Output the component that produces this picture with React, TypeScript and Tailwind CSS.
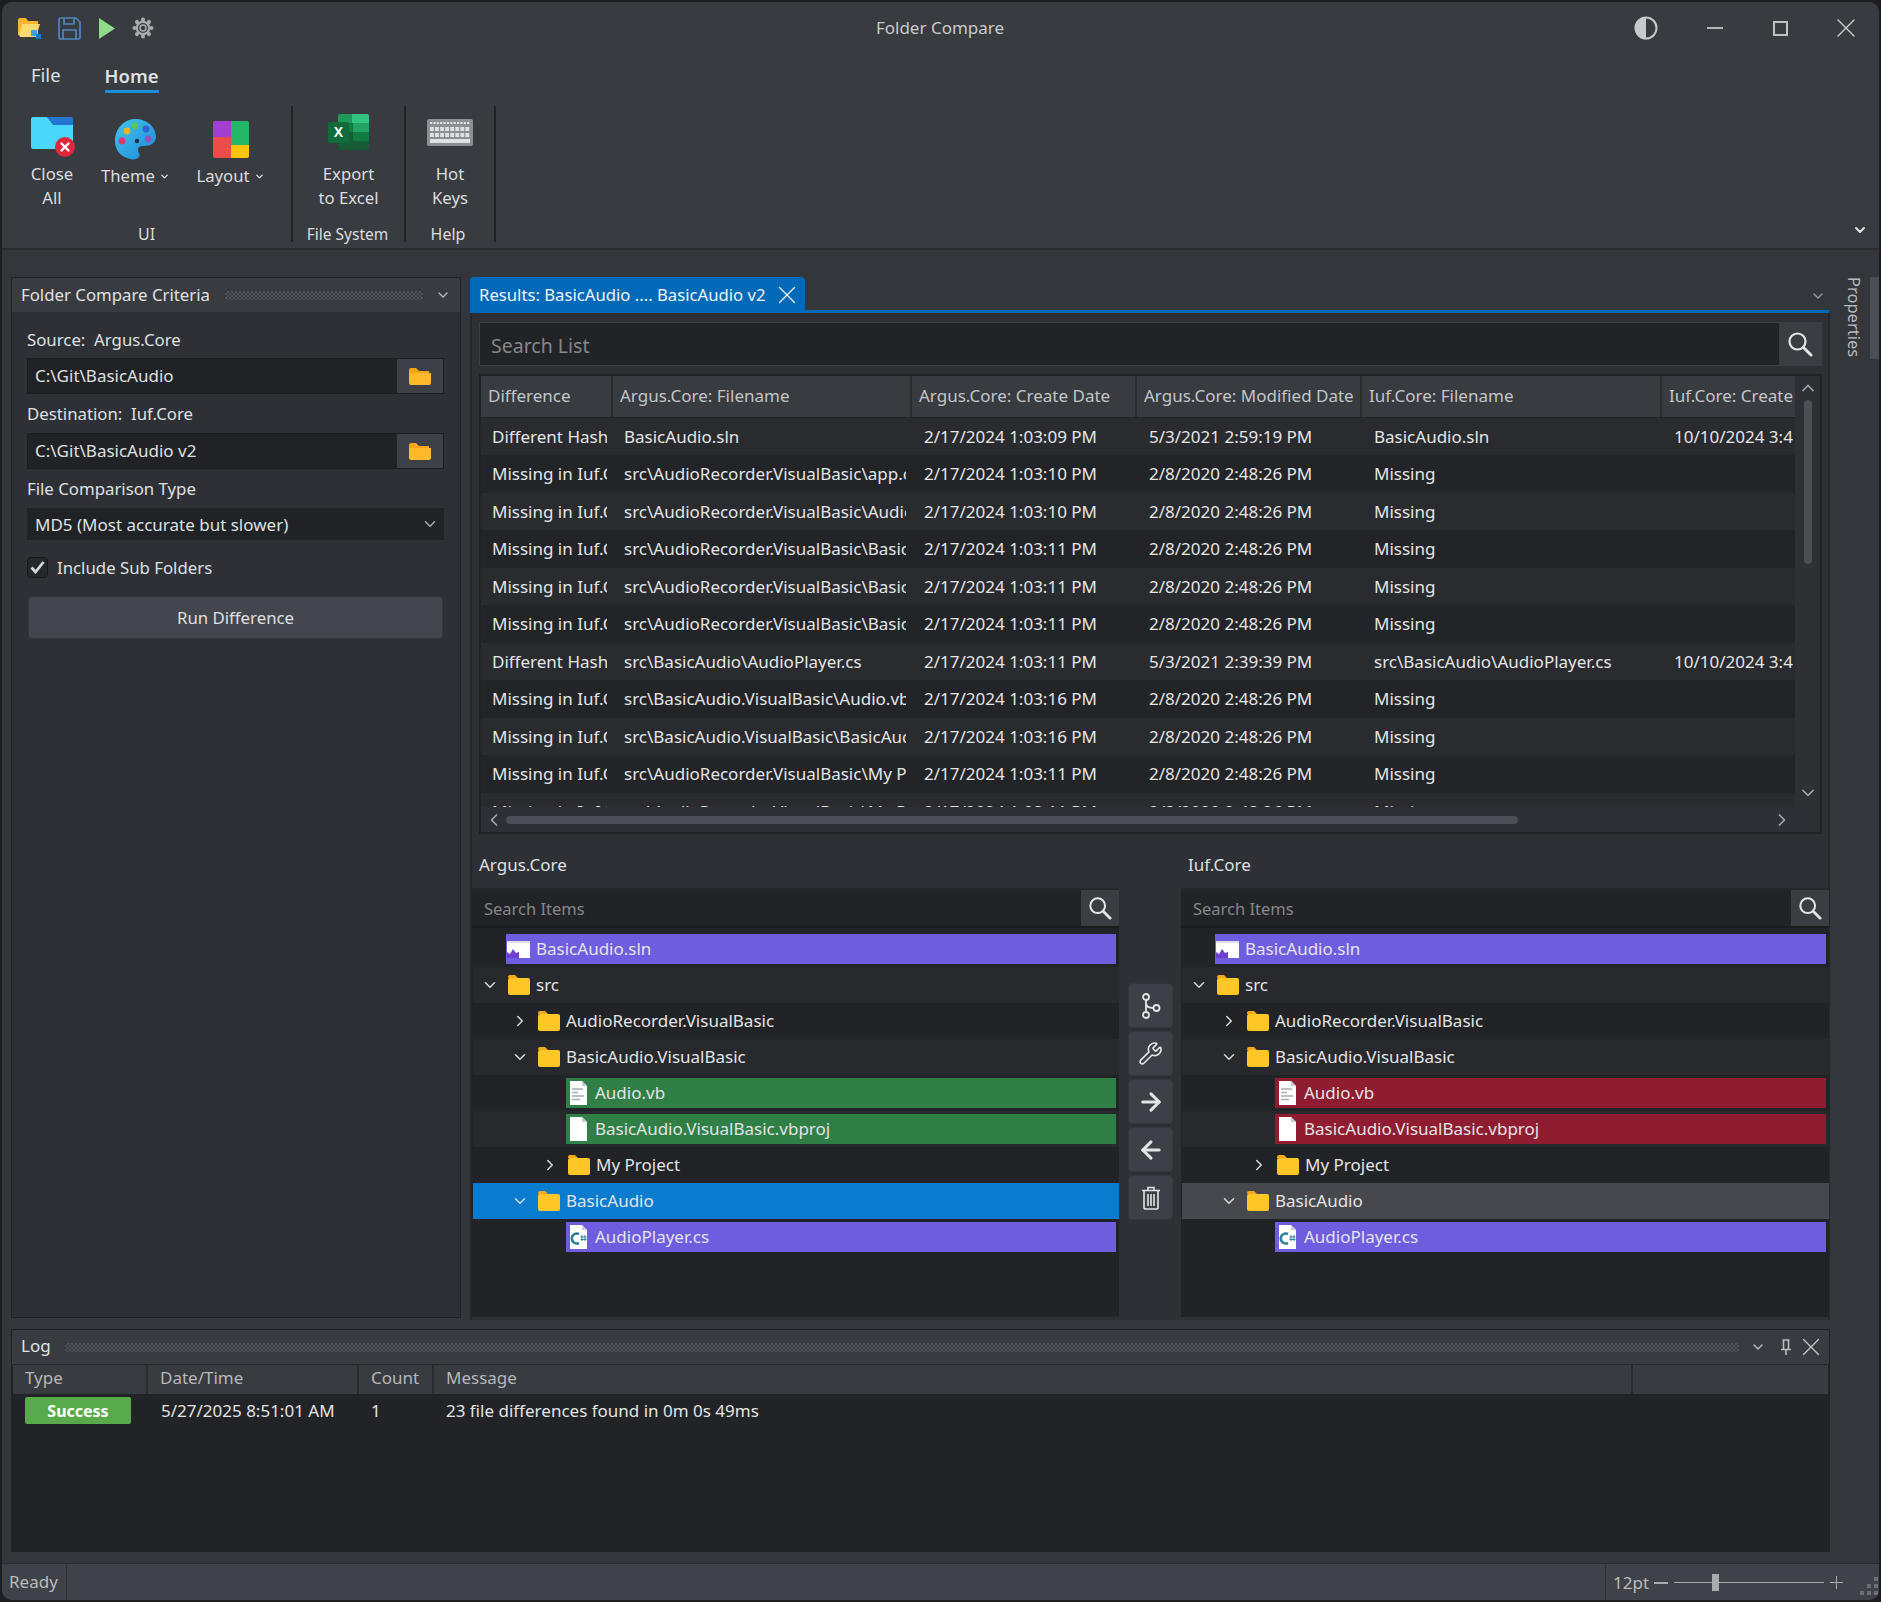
import { ArrowLeft, ArrowRight, ChevronDown, ChevronLeft, ChevronRight, ChevronUp, Wrench, X } from "lucide-react";
import type { ReactNode } from "react";

const FONT = "font-['Noto_Sans','Open_Sans',sans-serif]";

const COLS = [
    { w: "w-[132px]", cell: "pl-[11px] pr-[6px]" },
    { w: "w-[299px]", cell: "pl-[11px] pr-[6px]" },
    { w: "w-[225px]", cell: "pl-[12px] pr-[6px]" },
    { w: "w-[225px]", cell: "pl-[12px] pr-[6px]" },
    { w: "w-[300px]", cell: "pl-[12px] pr-[6px]" },
    { w: "w-[133px]", cell: "pl-[12px] pr-[2px]" },
];

const HEADERS = [
    "Difference",
    "Argus.Core: Filename",
    "Argus.Core: Create Date",
    "Argus.Core: Modified Date",
    "Iuf.Core: Filename",
    "Iuf.Core: Create Date",
];

const MISSING = "Missing in Iuf.Core";
const ROWS = [
    ["Different Hash", "BasicAudio.sln", "2/17/2024 1:03:09 PM", "5/3/2021 2:59:19 PM", "BasicAudio.sln", "10/10/2024 3:45:12 PM"],
    [MISSING, "src\\AudioRecorder.VisualBasic\\app.config", "2/17/2024 1:03:10 PM", "2/8/2020 2:48:26 PM", "Missing", ""],
    [MISSING, "src\\AudioRecorder.VisualBasic\\AudioRecorder.vb", "2/17/2024 1:03:10 PM", "2/8/2020 2:48:26 PM", "Missing", ""],
    [MISSING, "src\\AudioRecorder.VisualBasic\\BasicAudio.vb", "2/17/2024 1:03:11 PM", "2/8/2020 2:48:26 PM", "Missing", ""],
    [MISSING, "src\\AudioRecorder.VisualBasic\\BasicAudio.vbproj", "2/17/2024 1:03:11 PM", "2/8/2020 2:48:26 PM", "Missing", ""],
    [MISSING, "src\\AudioRecorder.VisualBasic\\BasicAudio.sln", "2/17/2024 1:03:11 PM", "2/8/2020 2:48:26 PM", "Missing", ""],
    ["Different Hash", "src\\BasicAudio\\AudioPlayer.cs", "2/17/2024 1:03:11 PM", "5/3/2021 2:39:39 PM", "src\\BasicAudio\\AudioPlayer.cs", "10/10/2024 3:45:12 PM"],
    [MISSING, "src\\BasicAudio.VisualBasic\\Audio.vb", "2/17/2024 1:03:16 PM", "2/8/2020 2:48:26 PM", "Missing", ""],
    [MISSING, "src\\BasicAudio.VisualBasic\\BasicAudio.vbproj", "2/17/2024 1:03:16 PM", "2/8/2020 2:48:26 PM", "Missing", ""],
    [MISSING, "src\\AudioRecorder.VisualBasic\\My Project\\App.config", "2/17/2024 1:03:11 PM", "2/8/2020 2:48:26 PM", "Missing", ""],
    [MISSING, "src\\AudioRecorder.VisualBasic\\My Project\\Res.vb", "2/17/2024 1:03:11 PM", "2/8/2020 2:48:26 PM", "Missing", ""],
];

function FolderIcon() {
    return (
        <svg width="24" height="22" viewBox="0 0 24 22" className="shrink-0">
            <path d="M1 3a2 2 0 0 1 2-2h5l3 3H1z" fill="#f5a81c" />
            <rect x="1" y="4" width="22" height="17" rx="2" fill="#ffc628" />
        </svg>
    );
}

function OpenIcon() {
    return (
        <svg width="22" height="17" viewBox="0 0 22 17">
            <path d="M0 2a2 2 0 0 1 2-2h5l3 3h10v3H0z" fill="#f7a518" />
            <path d="M0 5h22v10a2 2 0 0 1-2 2H2a2 2 0 0 1-2-2z" fill="#ffb92a" />
        </svg>
    );
}

function SearchIcon({ size = 26 }: { size?: number }) {
    return (
        <svg width={size} height={size} viewBox="0 0 26 26" fill="none" stroke="#e3e4e5" strokeWidth="2.2" strokeLinecap="round">
            <circle cx="10.5" cy="10.5" r="8" />
            <path d="M16.5 16.5l7.5 7.5" strokeWidth="3" />
        </svg>
    );
}

function SlnIcon() {
    return (
        <svg width="23" height="20" viewBox="0 0 23 20" className="shrink-0">
            <rect x="0" y="2" width="23" height="17" fill="#fff" />
            <path d="M0 19v-6l3 2 3-5 3 4 3-1v6z" fill="#6f3fd0" />
            <rect x="0" y="2" width="23" height="2" fill="#dfe0e6" />
        </svg>
    );
}

function DocIcon({ lines = false, cs = false }: { lines?: boolean; cs?: boolean }) {
    return (
        <svg width="19" height="24" viewBox="0 0 19 24" className="shrink-0">
            <path d="M1 0h12l5 5v19H1z" fill="#fff" />
            <path d="M13 0v5h5z" fill="#c9ccd1" />
            {lines && <path d="M3 8h11M3 11.5h6M3 15h12M3 18.5h8" stroke="#a8abb0" strokeWidth="1.4" />}
            {cs && (
                <>
                    <path d="M10 9a5 5 0 1 0 0 9" fill="none" stroke="#2f7f9a" strokeWidth="2.6" />
                    <path d="M13 10v6M16 10v6M11.5 12h6M11.5 14.5h6" stroke="#2f7f9a" strokeWidth="1" />
                </>
            )}
        </svg>
    );
}

function CloseAllIcon() {
    return (
        <svg width="46" height="42" viewBox="0 0 46 42">
            <path d="M2 3a2 2 0 0 1 2-2h14l5 6h21v24a2 2 0 0 1-2 2H4a2 2 0 0 1-2-2z" fill="#49d8fb" />
            <path d="M18 1h24a2 2 0 0 1 2 2v6H24z" fill="#2476d2" />
            <circle cx="36" cy="31" r="10" fill="#e0263c" />
            <path d="M32.5 27.5l7 7M39.5 27.5l-7 7" stroke="#fff" strokeWidth="2.4" strokeLinecap="round" />
        </svg>
    );
}

function PaletteIcon() {
    return (
        <svg width="42" height="41" viewBox="0 0 42 41">
            <defs>
                <linearGradient id="palette-fill" x1="0" y1="0" x2="1" y2="1">
                    <stop offset="0" stopColor="#44c4ee" />
                    <stop offset="1" stopColor="#1b8ad8" />
                </linearGradient>
            </defs>
            <path d="M20 0C32 0 41 8 41 18c0 5-5 9-11 9-4 0-7 0-7 4 0 3 3 4 1 7-2 3-8 3-12 1C4 36 0 30 0 22 0 10 9 0 20 0z" fill="url(#palette-fill)" />
            <circle cx="12" cy="12" r="3.400" fill="#f0b323" />
            <circle cx="20" cy="7" r="3.200" fill="#5fc454" />
            <circle cx="31" cy="10" r="3.400" fill="#2f63d2" />
            <circle cx="33" cy="20" r="3.400" fill="#8b54c4" />
            <circle cx="7" cy="22" r="3.400" fill="#d83a6a" />
            <circle cx="22" cy="22" r="2.200" fill="#203040" />
        </svg>
    );
}

function LayoutIcon() {
    return (
        <svg width="36" height="37" viewBox="0 0 36 37">
            <path d="M2 0h16v16H0V2a2 2 0 0 1 2-2z" fill="#a03fd2" />
            <path d="M18 0h16a2 2 0 0 1 2 2v22H18z" fill="#22b765" />
            <path d="M0 16h18v21H2a2 2 0 0 1-2-2z" fill="#ee4b4b" />
            <path d="M18 24h18v11a2 2 0 0 1-2 2H18z" fill="#fcc30d" />
        </svg>
    );
}

function ExcelIcon() {
    return (
        <svg width="41" height="36" viewBox="0 0 41 36">
            <path d="M10 2a2 2 0 0 1 2-2h12v9H10z" fill="#1e9a5c" />
            <path d="M24 0h15a2 2 0 0 1 2 2v7H24z" fill="#33c481" />
            <rect x="10" y="9" width="15" height="9" fill="#107c41" />
            <rect x="25" y="9" width="16" height="9" fill="#21a366" />
            <rect x="10" y="18" width="15" height="9" fill="#185c37" />
            <rect x="25" y="18" width="16" height="9" fill="#107c41" />
            <path d="M10 27h31v7a2 2 0 0 1-2 2H12a2 2 0 0 1-2-2z" fill="#185c37" />
            <rect x="0" y="8" width="21" height="21" rx="2" fill="#0f6b3a" />
            <text x="10.5" y="23" textAnchor="middle" fontSize="14" fontWeight="700" fill="#fff" fontFamily="Liberation Sans">X</text>
        </svg>
    );
}

function KeyboardIcon() {
    const keys = (y: number, n: number, h: number) =>
        Array.from({ length: n }, (_, i) => (
            <rect key={`${y}-${i}`} x={3 + (i * 40.5) / n} y={y} width={40.5 / n - 1.2} height={h} fill="#dfe0e2" />
        ));
    return (
        <svg width="46" height="27" viewBox="0 0 46 27">
            <rect width="46" height="27" rx="2" fill="#8b8e93" />
            {keys(3, 12, 2)}
            {keys(8, 8, 4)}
            {keys(14, 8, 4)}
            <rect x="3" y="20" width="40" height="4" fill="#dfe0e2" />
        </svg>
    );
}

function GearIcon() {
    const lobes = [0, 45, 90, 135, 180, 225, 270, 315];
    return (
        <svg width="22" height="22" viewBox="0 0 22 22" fill="none" stroke="#a9abae" className="ml-[17px]">
            <circle cx="11" cy="11" r="3" strokeWidth="1.6" />
            <circle cx="11" cy="11" r="6.200" strokeWidth="2.200" />
            {lobes.map((a) => (
                <circle key={a} cx="11" cy="2.500" r="2" fill="#a9abae" stroke="none" transform={`rotate(${a} 11 11)`} />
            ))}
        </svg>
    );
}

function RibbonItem({ icon, lines, menu = false, w, top }: { icon: ReactNode; lines: string[]; menu?: boolean; w: string; top: string }) {
    return (
        <div className={`flex flex-col items-center ${w}`}>
            <div className={`h-[56px] flex items-start justify-center ${top}`}>{icon}</div>
            <div className={`text-[16.7px] leading-[24px] text-center whitespace-nowrap text-[#dcdddf] ${menu ? "mt-[2px]" : ""}`}>
                {lines.map((l) => (
                    <div key={l} className="flex items-center justify-center gap-[4px]">
                        {l}
                        {menu && <ChevronDown size={11} strokeWidth={3} />}
                    </div>
                ))}
            </div>
        </div>
    );
}

function Grip({ className }: { className: string }) {
    return <div className={`h-[9px] bg-[repeating-conic-gradient(#505358_0_25%,transparent_0_50%)] bg-[length:4px_4px] shrink-0 ${className}`} />;
}

function CriteriaPanel() {
    const field = "h-[36px] flex bg-[#212225] border border-[#1c1d20]";
    return (
        <div className="w-[450px] h-[1041px] flex flex-col bg-[#2e3035] border border-[#212225]">
            <div className="h-[34px] flex items-center bg-[#383b40] pl-[9px] pr-[9px] shrink-0">
                <span className="w-[204px] text-[16.8px] text-[#e0e1e2] whitespace-nowrap">Folder Compare Criteria</span>
                <Grip className="w-[198px]" />
                <ChevronDown size={16} className="ml-auto text-[#b9bbbe]" />
            </div>
            <div className="flex flex-col pl-[15px] pr-[16px] pt-[16px] text-[16.8px] text-[#dfe0e1]">
                <div className="h-[24px] leading-[24px] mb-[6px]">Source:&nbsp; Argus.Core</div>
                <div className={field}>
                    <div className="flex-1 pl-[7px] leading-[34px] text-[17px]">C:\Git\BasicAudio</div>
                    <div className="w-[46px] bg-[#3d4046] flex items-center justify-center"><OpenIcon /></div>
                </div>
                <div className="h-[24px] leading-[24px] mt-[8px] mb-[7px]">Destination:&nbsp; Iuf.Core</div>
                <div className={field}>
                    <div className="flex-1 pl-[7px] leading-[34px] text-[17px]">C:\Git\BasicAudio v2</div>
                    <div className="w-[46px] bg-[#3d4046] flex items-center justify-center"><OpenIcon /></div>
                </div>
                <div className="h-[24px] leading-[24px] mt-[8px] mb-[7px]">File Comparison Type</div>
                <div className="h-[32px] flex items-center justify-between bg-[#212225] pl-[8px] pr-[5px] text-[17px]">
                    <span className="pt-[2px]">MD5 (Most accurate but slower)</span>
                    <ChevronDown size={18} className="text-[#a9abae]" />
                </div>
                <div className="flex items-center mt-[17px] h-[21px]">
                    <div className="w-[21px] h-[21px] rounded-[4px] bg-[#26272a] border border-[#17181a] flex items-center justify-center">
                        <svg width="15" height="13" viewBox="0 0 15 13" fill="none" stroke="#d5d6d8" strokeWidth="2.800">
                            <path d="M1.500 6.500l4 4.500 8-10" />
                        </svg>
                    </div>
                    <span className="ml-[9px]">Include Sub Folders</span>
                </div>
                <div className="h-[43px] mt-[18px] mx-[1px] rounded-[4px] bg-[#43464c] border border-[#34363b] flex items-center justify-center">
                    Run Difference
                </div>
            </div>
        </div>
    );
}

function ResultsGrid() {
    return (
        <div className="w-[1343px] h-[460px] mt-[8px] ml-[7px] flex flex-col border-2 border-[#212225] text-[17px] shrink-0">
            <div className="flex flex-1 min-h-0">
                <div className="w-[1314px] flex flex-col">
                    <div className="h-[41px] flex bg-[#383b40] shrink-0">
                        {HEADERS.map((h, i) => (
                            <div key={h} className={`${COLS[i].w} shrink-0 overflow-hidden whitespace-nowrap leading-[40px] pl-[7px] text-[#c3c5c8] ${i < 5 ? "border-r-2 border-[#2a2b2f]" : ""}`}>
                                {h}
                            </div>
                        ))}
                    </div>
                    <div className="flex-1 overflow-hidden bg-[#222326] pt-[0.5px]">
                        {ROWS.map((row, r) => (
                            <div key={r} className={`h-[37.5px] flex items-center ${r % 2 === 0 ? "bg-[#2a2b2f]" : "bg-[#232427]"}`}>
                                {row.map((c, i) => (
                                    <div key={i} className={`${COLS[i].w} shrink-0 ${COLS[i].cell}`}>
                                        <div className="overflow-hidden whitespace-nowrap text-[#e4e5e6]">{c}</div>
                                    </div>
                                ))}
                            </div>
                        ))}
                    </div>
                </div>
                <div className="w-[25px] flex flex-col items-center bg-[#2e3035] text-[#a7a9ad]">
                    <ChevronUp size={20} className="mt-[2px]" />
                    <div className="w-[8px] h-[164px] mt-[2px] rounded-full bg-[#4c4f55]" />
                    <ChevronDown size={20} className="mt-auto mb-[4px]" />
                </div>
            </div>
            <div className="h-[25px] flex items-center bg-[#2e3035] text-[#a7a9ad] shrink-0">
                <ChevronLeft size={20} className="ml-[3px]" />
                <div className="w-[1012px] h-[8px] ml-[2px] rounded-full bg-[#4c4f55]" />
                <ChevronRight size={20} className="ml-[254px]" />
            </div>
        </div>
    );
}

type TreeRow = {
    name: string;
    level: number;
    kind: "sln" | "folder" | "lines" | "blank" | "cs";
    open?: boolean;
    closed?: boolean;
    mark?: string;
    select?: string;
};

function buildTree(side: "left" | "right"): TreeRow[] {
    const changed = side === "left" ? "bg-[#2f7f47]" : "bg-[#8f1c30]";
    const selected = side === "left" ? "bg-[#0a7ccf]" : "bg-[#46484d]";
    return [
        { name: "BasicAudio.sln", level: 0, kind: "sln", mark: "bg-[#6f5de0]" },
        { name: "src", level: 0, kind: "folder", open: true },
        { name: "AudioRecorder.VisualBasic", level: 1, kind: "folder", closed: true },
        { name: "BasicAudio.VisualBasic", level: 1, kind: "folder", open: true },
        { name: "Audio.vb", level: 2, kind: "lines", mark: changed },
        { name: "BasicAudio.VisualBasic.vbproj", level: 2, kind: "blank", mark: changed },
        { name: "My Project", level: 2, kind: "folder", closed: true },
        { name: "BasicAudio", level: 1, kind: "folder", open: true, select: selected },
        { name: "AudioPlayer.cs", level: 2, kind: "cs", mark: "bg-[#6f5de0]" },
    ];
}

const INDENT: Record<number, string> = { 0: "pl-[2px]", 1: "pl-[32px]", 2: "pl-[62px]" };

function TreePanel({ side }: { side: "left" | "right" }) {
    const items = buildTree(side);
    return (
        <div className={`${side === "left" ? "w-[647px]" : "w-[648px]"} h-[429px] flex flex-col bg-[#222326] border-t-2 border-[#26272a] shrink-0`}>
            <div className="h-[38px] flex border-b-2 border-[#1b1c1e] shrink-0">
                <div className="flex-1 pl-[12px] leading-[38px] text-[16.5px] text-[#85878a]">Search Items</div>
                <div className="w-[38px] h-[36px] bg-[#3a3d42] flex items-center justify-center"><SearchIcon size={24} /></div>
            </div>
            <div className="text-[17px] text-[#e3e4e5] mt-[3px] ml-[1px]">
                {items.map((it, r) => (
                    <div key={it.name} className={`h-[36px] flex items-center pr-[3px] ${INDENT[it.level]} ${it.select ?? (r % 2 === 1 ? "bg-[#28292d]" : "")}`}>
                        <div className="w-[31px] pr-[1px] flex justify-center text-[#d8d9db] shrink-0">
                            {it.open && <ChevronDown size={18} strokeWidth={2} />}
                            {it.closed && <ChevronRight size={18} strokeWidth={2} />}
                        </div>
                        <div className={`flex-1 h-[30px] flex items-center pl-[1px] whitespace-nowrap ${it.mark ?? ""}`}>
                            {it.kind === "folder" && <FolderIcon />}
                            {it.kind === "sln" && <SlnIcon />}
                            {it.kind === "lines" && <div className="pl-[2px]"><DocIcon lines /></div>}
                            {it.kind === "blank" && <div className="pl-[2px]"><DocIcon /></div>}
                            {it.kind === "cs" && <div className="pl-[2px]"><DocIcon cs /></div>}
                            <span className={it.kind === "folder" ? "ml-[5px]" : it.kind === "sln" ? "ml-[6px]" : "ml-[7px]"}>{it.name}</span>
                        </div>
                    </div>
                ))}
            </div>
        </div>
    );
}

function ActionButton({ children }: { children: ReactNode }) {
    return (
        <div className="w-[45px] h-[45px] mb-[3px] rounded-[4px] bg-[#3d4046] border border-[#34363b] flex items-center justify-center text-[#e3e4e5]">
            {children}
        </div>
    );
}

function ResultsPanel() {
    return (
        <div className="w-[1360px] h-[1043px] flex flex-col">
            <div className="h-[36px] flex items-start shrink-0 border-b-[3px] border-[#0069b8] mr-[1px]">
                <div className="w-[335px] h-[36px] flex items-center bg-[#0069b8] rounded-t-[4px] pl-[9px] text-[16.7px] text-[#f2f4f6] whitespace-nowrap">
                    Results: BasicAudio .... BasicAudio v2
                    <X size={30} strokeWidth={1} className="ml-auto mr-[3px]" />
                </div>
                <ChevronDown size={16} className="ml-auto mr-[3px] mt-[11px] text-[#9a9ca0]" />
            </div>
            <div className="flex-1 flex flex-col bg-[#2e3035] border-x-2 border-[#26272b] min-h-0">
                <div className="w-[1343px] h-[44px] mt-[9px] ml-[7px] flex bg-[#222326] border border-[#3c3e43] shrink-0">
                    <div className="flex-1 pl-[11px] pt-[2px] leading-[42px] text-[19.5px] text-[#85878a]">Search List</div>
                    <div className="w-[42px] bg-[#3a3d42] flex items-center justify-center"><SearchIcon /></div>
                </div>
                <ResultsGrid />
                <div className="h-[54px] flex items-center pt-[8px] text-[17px] text-[#dfe0e1] shrink-0">
                    <span className="w-[716px] pl-[7px]">Argus.Core</span>
                    <span>Iuf.Core</span>
                </div>
                <div className="flex flex-1 min-h-0">
                    <TreePanel side="left" />
                    <div className="w-[62px] pl-[9px] pt-[95px] shrink-0">
                        <ActionButton>
                            <svg width="20" height="26" viewBox="0 0 20 26" fill="none" stroke="#e3e4e5" strokeWidth="1.800">
                                <circle cx="5" cy="4" r="3" />
                                <circle cx="5" cy="22" r="3" />
                                <circle cx="15.500" cy="15" r="3" />
                                <path d="M5 7v12M5 10c0 4 3 5 7.500 5" />
                            </svg>
                        </ActionButton>
                        <ActionButton><Wrench size={25} strokeWidth={1.6} /></ActionButton>
                        <ActionButton><ArrowRight size={28} strokeWidth={2.6} /></ActionButton>
                        <ActionButton><ArrowLeft size={28} strokeWidth={2.6} /></ActionButton>
                        <ActionButton>
                            <svg width="20" height="24" viewBox="0 0 20 24" fill="none" stroke="#e3e4e5" strokeWidth="1.600">
                                <path d="M1 4.500h18M7 4V1.500h6V4M3 5v17a1.500 1.500 0 0 0 1.500 1h11a1.500 1.500 0 0 0 1.500-1V5M7 8v12M10 8v12M13 8v12" />
                            </svg>
                        </ActionButton>
                    </div>
                    <TreePanel side="right" />
                </div>
            </div>
        </div>
    );
}

function LogPanel() {
    const heads = [
        { label: "Type", w: "w-[135px]" },
        { label: "Date/Time", w: "w-[211px]" },
        { label: "Count", w: "w-[75px]" },
        { label: "Message", w: "w-[1199px]" },
    ];
    return (
        <div className="w-[1819px] h-[223px] mt-[9px] ml-[9px] flex flex-col bg-[#222326] border border-[#212225] shrink-0">
            <div className="h-[34px] flex items-center bg-[#383b40] pl-[9px] text-[17px] text-[#e0e1e2] shrink-0">
                <span className="w-[44px] -mt-[2px]">Log</span>
                <Grip className="w-[1674px]" />
                <ChevronDown size={16} className="ml-[11px] text-[#b9bbbe]" />
                <svg width="12" height="16" viewBox="0 0 12 16" fill="none" stroke="#b9bbbe" strokeWidth="1.600" className="ml-[14px]">
                    <path d="M2.500 1h7M3.500 1v9M8.500 1v9M1 10.500h10M6 11v5" />
                </svg>
                <X size={30} strokeWidth={1} className="ml-[4px] text-[#c5c7ca]" />
            </div>
            <div className="h-[30px] flex ml-[1px] mr-[1px] bg-[#383b40] text-[17px] text-[#b5b7ba] shrink-0 border-t border-[#26272a]">
                {heads.map((h) => (
                    <div key={h.label} className={`${h.w} pl-[12px] leading-[26px] border-r-2 border-[#2a2b2f] shrink-0`}>{h.label}</div>
                ))}
            </div>
            <div className="flex items-center mt-[3px] text-[17px] text-[#e3e4e5]">
                <div className="w-[106px] h-[27px] ml-[13px] rounded-[2px] bg-[#59aa4d] text-white font-bold text-[16px] flex items-center justify-center">Success</div>
                <span className="w-[210px] ml-[30px]">5/27/2025 8:51:01 AM</span>
                <span className="w-[75px]">1</span>
                <span>23 file differences found in 0m 0s 49ms</span>
            </div>
        </div>
    );
}

function StatusBar() {
    return (
        <div className="h-[38px] mt-[11px] flex items-center bg-[#3f4248] border-t border-[#2b2c30] text-[#b9bbbe] text-[17px] shrink-0">
            <div className="w-[65px] h-full pl-[7px] leading-[36px] border-r border-[#2f3135]">Ready</div>
            <div className="ml-auto w-[274px] h-full flex items-center border-l border-[#2f3135] pl-[7px]">
                <span className="w-[41px]">12pt</span>
                <div className="w-[14px] h-[2px] bg-[#a8aaad]" />
                <div className="w-[150px] ml-[6px] h-[1px] bg-[#a8aaad] flex items-center">
                    <div className="w-[7px] h-[17px] ml-[38px] bg-[#a8aaad]" />
                </div>
                <svg width="13" height="13" viewBox="0 0 13 13" stroke="#a8aaad" className="ml-[6px]">
                    <path d="M0 6.500h13M6.500 0v13" />
                </svg>
                <svg width="18" height="18" viewBox="0 0 18 18" fill="#6c6f74" className="ml-[17px] mt-[6px]">
                    <rect x="14" y="0" width="4" height="4" />
                    <rect x="14" y="7" width="4" height="4" />
                    <rect x="7" y="7" width="4" height="4" />
                    <rect x="14" y="14" width="4" height="4" />
                    <rect x="7" y="14" width="4" height="4" />
                    <rect x="0" y="14" width="4" height="4" />
                </svg>
            </div>
        </div>
    );
}

export default function App() {
    return (
        <div className={`w-[1881px] h-[1602px] p-[2px] bg-[#1d1e21] ${FONT}`}>
            <div className="w-full h-full rounded-[10px] overflow-hidden flex flex-col bg-[#33363b]">
                <div className="bg-[#383b40] h-[248px] flex flex-col shrink-0 border-b-2 border-[#2b2c30]">
                    <div className="h-[48px] flex items-center shrink-0 pt-[4px] pl-[16px] pr-[17px] text-[#c9cacc]">
                        <svg width="23" height="22" viewBox="0 0 23 22">
                            <path d="M0 3a2 2 0 0 1 2-2h6l2 3h10v14H0z" fill="#f6b52c" />
                            <path d="M1 18l3-11h18l-4 13H2z" fill="#ffdb6e" />
                            <rect x="13" y="13" width="6" height="6" fill="#3aa0e8" />
                            <rect x="18" y="17" width="5" height="5" fill="#1478d4" />
                        </svg>
                        <svg width="23" height="23" viewBox="0 0 23 23" fill="none" stroke="#4f86c6" strokeWidth="1.700" className="ml-[17px]">
                            <path d="M1 2.500A1.500 1.500 0 0 1 2.500 1H18l4 4v15.500a1.500 1.500 0 0 1-1.500 1.500h-18A1.500 1.500 0 0 1 1 20.500z" />
                            <path d="M6 1v6h10V1M5 22v-9h13v9" />
                        </svg>
                        <svg width="16" height="21" viewBox="0 0 16 21" className="ml-[18px]">
                            <path d="M0 0l16 10.500L0 21z" fill="#8edb8a" />
                        </svg>
                        <GearIcon />
                        <div className="flex-1 text-center text-[17px] pl-[92px]">Folder Compare</div>
                        <svg width="24" height="24" viewBox="0 0 24 24" className="mr-[49px]">
                            <circle cx="12" cy="12" r="10.500" fill="none" stroke="#c8c9cb" strokeWidth="2" />
                            <path d="M12 1.500a10.500 10.500 0 0 0 0 21z" fill="#c8c9cb" />
                        </svg>
                        <div className="w-[16px] h-[2px] bg-[#b4b6b9] mr-[50px]" />
                        <div className="w-[15px] h-[15px] border-2 border-[#c0c2c4] mr-[42px]" />
                        <X size={32} strokeWidth={1} className="text-[#c8c9cb]" />
                    </div>
                    <div className="h-[56px] flex shrink-0 pl-[29px] text-[18.5px] text-[#dfe0e1]">
                        <span className="mt-[12px] leading-[26px]">File</span>
                        <span className="ml-[44px] mt-[12px] h-[31px] leading-[28px] font-semibold border-b-[3px] border-[#1a8fdc]">Home</span>
                    </div>
                    <div className="flex flex-1 min-h-0">
                        <div className="w-[291px] h-[136px] border-r-2 border-[#212225] flex flex-col shrink-0">
                            <div className="flex h-[116px] pl-[24px]">
                                <RibbonItem w="w-[52px]" top="pt-[10px]" icon={<CloseAllIcon />} lines={["Close", "All"]} />
                                <div className="ml-[23px]"><RibbonItem w="w-[69px]" top="pt-[13px]" icon={<PaletteIcon />} lines={["Theme"]} menu /></div>
                                <div className="ml-[27px]"><RibbonItem w="w-[67px]" top="pt-[15px]" icon={<LayoutIcon />} lines={["Layout"]} menu /></div>
                            </div>
                            <div className="h-[20px] leading-[24px] text-center text-[16px] text-[#dcdddf]">UI</div>
                        </div>
                        <div className="w-[113px] h-[136px] border-r-2 border-[#212225] flex flex-col shrink-0">
                            <div className="h-[116px]"><RibbonItem w="w-[111px]" top="pt-[8px]" icon={<ExcelIcon />} lines={["Export", "to Excel"]} /></div>
                            <div className="h-[20px] leading-[24px] text-center text-[15.5px] text-[#dcdddf] whitespace-nowrap pr-[2px]">File System</div>
                        </div>
                        <div className="w-[90px] h-[136px] border-r-2 border-[#212225] flex flex-col shrink-0">
                            <div className="h-[116px]"><RibbonItem w="w-full" top="pt-[13px]" icon={<KeyboardIcon />} lines={["Hot", "Keys"]} /></div>
                            <div className="h-[20px] leading-[24px] text-center text-[16px] text-[#dcdddf] pr-[4px]">Help</div>
                        </div>
                        <ChevronDown size={16} strokeWidth={3} className="ml-auto mr-[11px] mt-[116px] text-[#e3e4e5]" />
                    </div>
                </div>

                <div className="flex pt-[27px] pl-[9px] h-[1043px] box-content shrink-0">
                    <CriteriaPanel />
                    <div className="ml-[9px]"><ResultsPanel /></div>
                    <div className="w-[49px] flex shrink-0 text-[16.5px] text-[#b9bbbe]">
                        <span className="ml-[15px] [writing-mode:vertical-rl] leading-[18px] h-[82px]">Properties</span>
                        <div className="w-[9px] h-[82px] ml-[7px] bg-[#4a4d52]" />
                    </div>
                </div>

                <LogPanel />
                <StatusBar />
            </div>
        </div>
    );
}
